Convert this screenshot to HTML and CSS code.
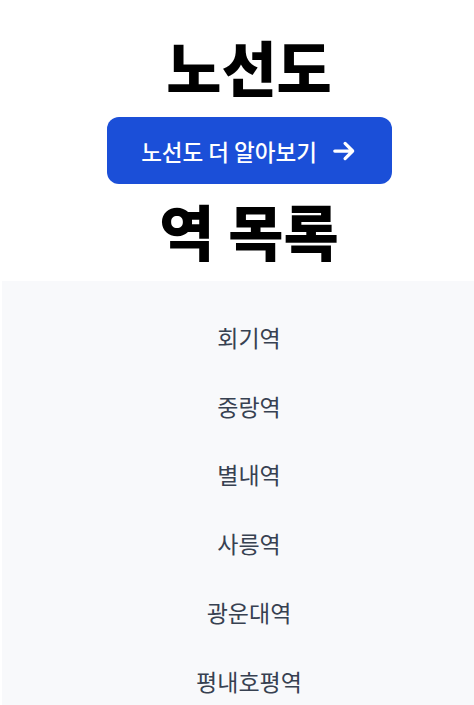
FILE: index.html
```html
<!DOCTYPE html>
<html>

<head>
    <title>노선도</title>
    <meta charset="utf-8">
    <link rel="stylesheet" href="styles.css">
</head>

<body>
    <h1 class="title">노선도</h1>
    <div class="more">
        <a class="more-btn" href="#">노선도 더 알아보기
            <svg class="arrow" width="26" height="26" viewBox="0 0 24 24">
                <path d="M3.5 12h16M13 5l7 7-7 7" fill="none" stroke="white" stroke-width="3"
                    stroke-linecap="round" stroke-linejoin="round" />
            </svg>
        </a>
    </div>
    <h2 class="title">역 목록</h2>

    <ul class="stations">
        <li>회기역</li>
        <li>중랑역</li>
        <li>별내역</li>
        <li>사릉역</li>
        <li>광운대역</li>
        <li>평내호평역</li>
    </ul>
</body>

</html>
```

FILE: styles.css
```css
body {
    margin: 0;
    padding-left: 24px;
    background-color: white;
    font-family: "Noto Sans CJK KR", "Noto Sans", sans-serif;
}

.title {
    margin: 0;
    text-align: center;
    font-size: 60px;
    line-height: 60px;
    font-weight: 900;
    color: black;
}

h1.title {
    margin-top: 36px;
}

h2.title {
    margin-top: 16px;
}

.more {
    display: flex;
    justify-content: center;
    margin-top: 21px;
}

.more-btn {
    display: flex;
    align-items: center;
    justify-content: center;
    gap: 14px;
    width: 285px;
    height: 67px;
    border-radius: 12px;
    background-color: #1b4fd8;
    color: white;
    font-size: 22.5px;
    font-weight: 500;
    text-decoration: none;
}

.arrow {
    margin-top: 1px;
}

/* list runs out to the right edge, text stays on the same centre line */
.stations {
    list-style: none;
    margin: 21px 0 0 -22px;
    padding: 22px 0 0 22px;
    background-color: #f8f9fb;
}

.stations li {
    text-align: center;
    font-size: 23px;
    line-height: 28.7px;
    padding: 20px 0;
    color: #374151;
}
```
